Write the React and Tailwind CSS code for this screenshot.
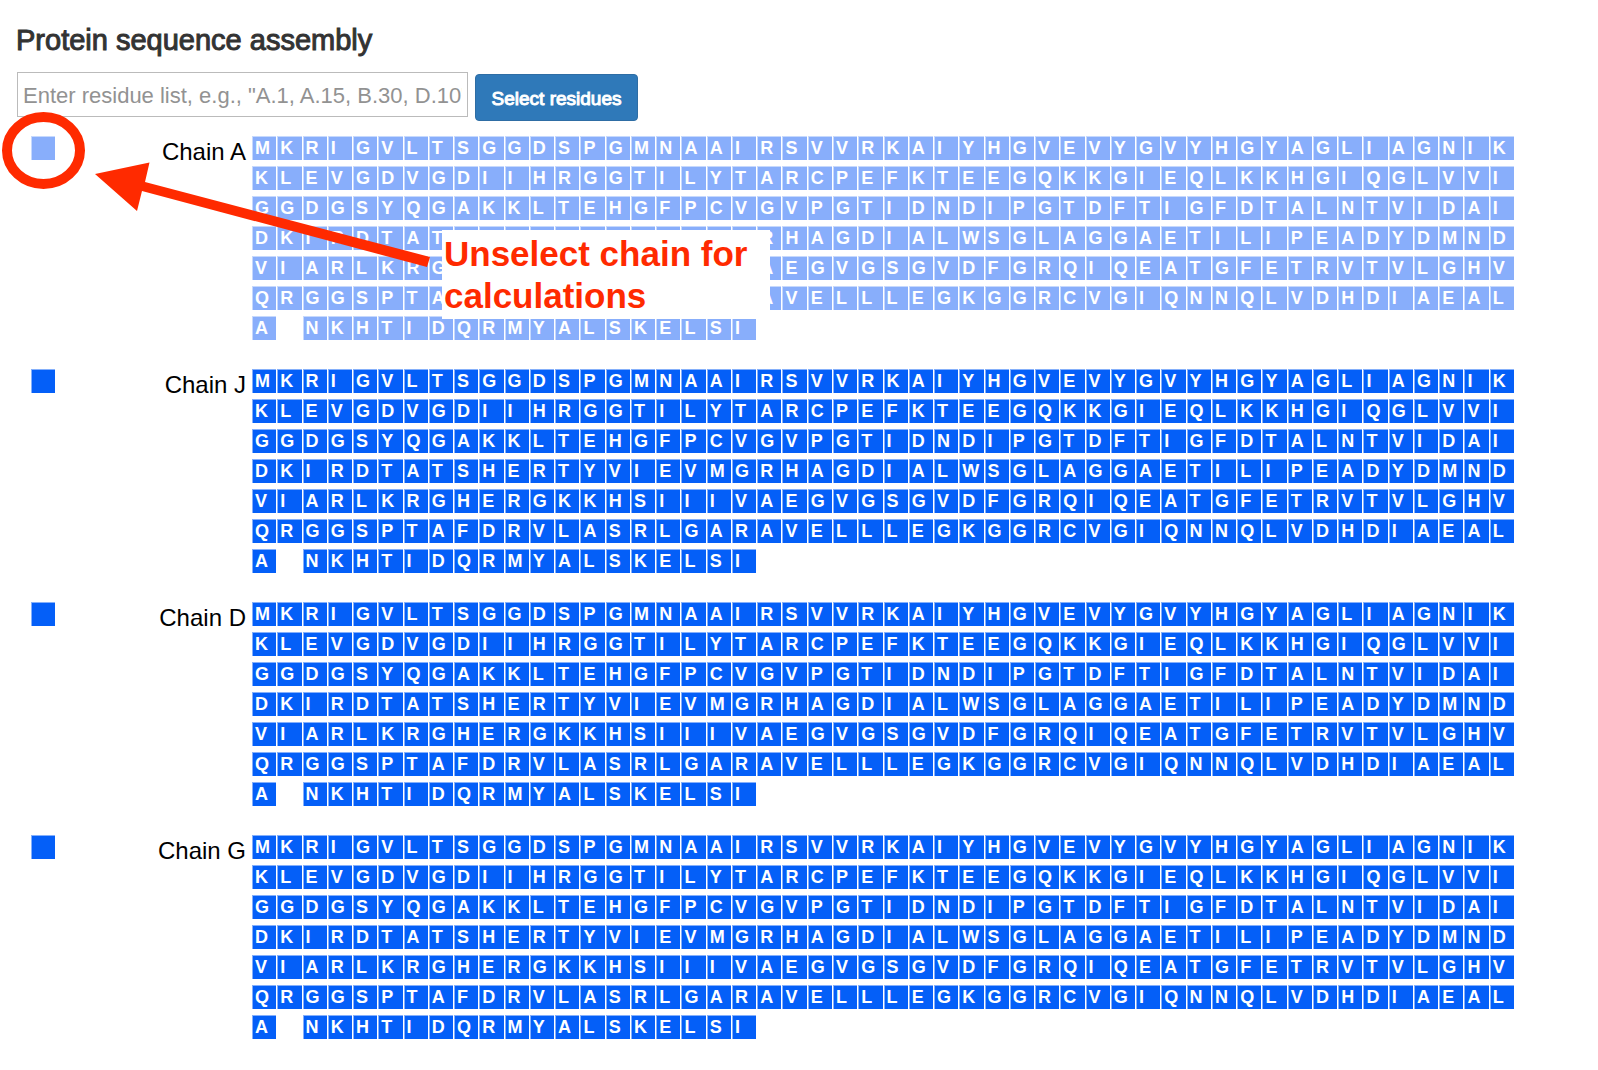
import React, { useState } from "react";

const ROWS = [
  "MKRIGVLTSGGDSPGMNAAIRSVVRKAIYHGVEVYGVYHGYAGLIAGNIK",
  "KLEVGDVGDIIHRGGTILYTARCPEFKTEEGQKKGIEQLKKHGIQGLVVI",
  "GGDGSYQGAKKLTEHGFPCVGVPGTIDNDIPGTDFTIGFDTALNTVIDAI",
  "DKIRDTATSHERTYVIEVMGRHAGDIALWSGLAGGAETILIPEADYDMND",
  "VIARLKRGHERGKKHSIIIVAEGVGSGVDFGRQIQEATGFETRVTVLGHV",
  "QRGGSPTAFDRVLASRLGARAVELLLEGKGGRCVGIQNNQLVDHDIAEAL",
  "A NKHTIDQRMYALSKELSI",
];

function Chain({ name, initial }) {
  const [selected, setSelected] = useState(initial);
  const id = `chain-${name}`;
  const fill = selected ? "border-[#85b0fb] bg-[#045ff8]" : "border-[#c6d9fd] bg-[#88aefb]";
  return (
    <section className="flex items-start">
      <div className="flex w-[252px] shrink-0 items-start justify-between pr-[6px] pl-[31px]">
        <input
          id={id}
          type="checkbox"
          checked={selected}
          onChange={(e) => setSelected(e.target.checked)}
          className={`size-6 appearance-none border-t border-l ${fill}`}
        />
        <label htmlFor={id} className="text-[24px] leading-[32px] text-black">
          Chain {name}
        </label>
      </div>
      <div className="grid flex-1 grid-cols-[repeat(50,minmax(0,1fr))] gap-x-px gap-y-[6px]">
        {ROWS.map((row, r) =>
          row.padEnd(50, " ").split("").map((c, i) =>
            c === " " ? (
              <span key={`${r}-${i}`} />
            ) : (
              <span
                key={`${r}-${i}`}
                className={`h-6 border-t border-l pl-[2px] text-[18px] leading-[22px] font-bold text-white ${fill}`}
              >
                {c}
              </span>
            ),
          ),
        )}
      </div>
    </section>
  );
}

function Annotation() {
  return (
    <>
      <svg
        className="pointer-events-none absolute top-0 left-0"
        width="450"
        height="330"
        viewBox="0 0 450 330"
        aria-hidden="true"
      >
        <ellipse cx="43.5" cy="150.5" rx="36.5" ry="33.5" fill="none" stroke="#ff2a00" strokeWidth="10" />
        <path d="M95 174L149.5 162.5L145 182L430 257L427 267L142 191L137 211Z" fill="#ff2a00" />
      </svg>
      <p className="absolute top-[230px] left-[442px] h-[89px] w-[328px] bg-white pt-[3px] pl-[2px] text-[35px] leading-[42px] font-bold whitespace-nowrap text-[#ff2a00]">
        Unselect chain for
        <br />
        calculations
      </p>
    </>
  );
}

export default function App() {
  return (
    <main className="relative min-h-screen bg-white pt-[20px] pr-[84px] pb-[30px] font-['Liberation_Sans',Arial,sans-serif]">
      <h1 className="pl-4 text-[29px] leading-[40px] font-normal text-[#333333] [-webkit-text-stroke:1px_#333333]">
        Protein sequence assembly
      </h1>
      <form className="mt-3 flex items-start gap-[7px] pl-[17px]" onSubmit={(e) => e.preventDefault()}>
        <input
          type="text"
          aria-label="Residue list"
          placeholder={'Enter residue list, e.g., "A.1, A.15, B.30, D.10"'}
          className="h-[45px] w-[451px] border border-[#bbbbbb] px-[5px] pt-[2px] text-[22px] text-[#333333] placeholder:text-[#929292]"
        />
        <button
          type="submit"
          className="mt-[2px] h-[47px] w-[163px] rounded-[4px] border border-[#2e6da4] bg-[#2f79b9] pt-[3px] text-[19px] text-white [-webkit-text-stroke:1px_white]"
        >
          Select residues
        </button>
      </form>
      <div className="mt-[15px] flex flex-col gap-[29px]">
        <Chain name="A" initial={false} />
        <Chain name="J" initial />
        <Chain name="D" initial />
        <Chain name="G" initial />
      </div>
      <Annotation />
    </main>
  );
}
